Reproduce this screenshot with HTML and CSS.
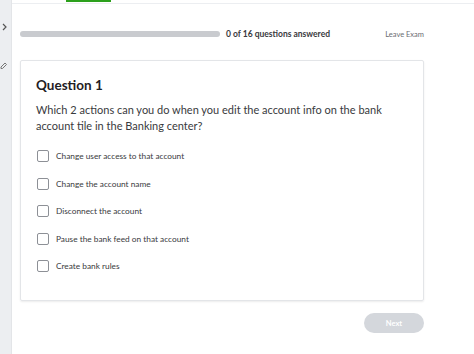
FILE: index.html
```html
<!DOCTYPE html>
<html lang="en">
<head>
    <meta charset="UTF-8">
    <title>Exam</title>
    <link rel="stylesheet" href="styles.css">
</head>
<body>
    <div class="sidebar">
        <svg class="side-icon chevron" width="6" height="8" viewBox="0 0 6 8"><path d="M1 1l3 3-3 3" fill="none" stroke="#555" stroke-width="1.2"/></svg>
        <svg class="side-icon pen" width="8" height="8" viewBox="0 0 8 8"><path d="M1 6l4-4 1.5 1.5-4 4H1z" fill="none" stroke="#777" stroke-width="1"/></svg>
    </div>
    <div class="main">
        <div class="topbar"><div class="tab"></div></div>
        <div class="content">
            <div class="progress-row">
                <div class="bar"></div>
                <span class="count">0 of 16 questions answered</span>
                <a class="leave">Leave Exam</a>
            </div>
            <div class="card">
                <h2>Question 1</h2>
                <p class="question">Which 2 actions can you do when you edit the account info on the bank account tile in the Banking center?</p>
                <ul class="options">
                    <li><span class="box"></span>Change user access to that account</li>
                    <li><span class="box"></span>Change the account name</li>
                    <li><span class="box"></span>Disconnect the account</li>
                    <li><span class="box"></span>Pause the bank feed on that account</li>
                    <li><span class="box"></span>Create bank rules</li>
                </ul>
            </div>
            <div class="actions">
                <button class="next">Next</button>
            </div>
        </div>
    </div>
</body>
</html>
```

FILE: styles.css
```css
body {
    margin: 0;
    font-family: "Lato", "Noto Sans", sans-serif;
    color: #393a3d;
    background-color: #fff;
    display: flex;
    height: 100vh;
}
.sidebar {
    width: 11px;
    flex-shrink: 0;
    background-color: #eceef1;
    border-right: 1px solid #e3e5e8;
    position: relative;
}
.side-icon {
    position: absolute;
    left: 2px;
}
.chevron {
    top: 23px;
}
.pen {
    top: 61px;
    left: 0;
}
.main {
    flex: 1;
}
.topbar {
    height: 3px;
    border-bottom: 1px solid #eceef1;
}
.tab {
    margin-left: 54px;
    width: 45px;
    height: 2px;
    background-color: #2ca01c;
}
.content {
    padding-left: 8px;
    width: 404px;
}
.progress-row {
    display: flex;
    align-items: center;
    margin-top: 24px;
    height: 12px;
}
.bar {
    width: 200px;
    height: 6px;
    border-radius: 3px;
    background-color: #c9cbcf;
}
.count {
    margin-left: 6px;
    font-size: 8.5px;
    font-weight: bold;
    color: #393a3d;
}
.leave {
    margin-left: auto;
    font-size: 7.5px;
    color: #6b6c72;
}
.card {
    margin-top: 20px;
    height: 241px;
    box-sizing: border-box;
    border: 1px solid #e3e5e8;
    border-radius: 2px;
    box-shadow: 0 1px 2px rgba(0, 0, 0, 0.08);
    padding: 16px 15px;
}
h2 {
    margin: 0;
    font-size: 13.5px;
    line-height: 17px;
    font-weight: bold;
    color: #1f2024;
}
.question {
    margin: 8px 0 0;
    font-size: 11px;
    line-height: 16px;
    color: #393a3d;
}
.options {
    list-style: none;
    margin: 16px 0 0;
    padding: 0;
}
.options li {
    display: flex;
    align-items: center;
    height: 12px;
    margin-bottom: 15.5px;
    font-size: 8.3px;
    color: #393a3d;
}
.box {
    width: 10px;
    height: 10px;
    border: 1px solid #8d9096;
    border-radius: 2px;
    margin-right: 7px;
    margin-left: 1px;
}
.actions {
    display: flex;
    justify-content: flex-end;
    margin-top: 12px;
}
.next {
    width: 60px;
    height: 20px;
    border: none;
    border-radius: 10px;
    background-color: #d4d7dc;
    color: #fff;
    font-family: inherit;
    font-size: 7.5px;
    font-weight: bold;
}
```
